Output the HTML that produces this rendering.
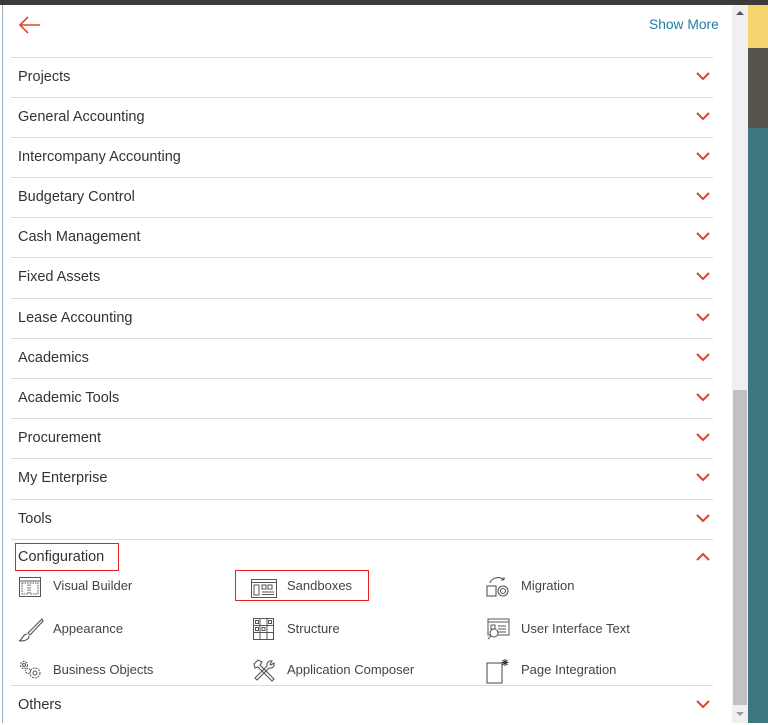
<!DOCTYPE html>
<html><head><style>
*{margin:0;padding:0;box-sizing:border-box}
body{width:768px;height:723px;overflow:hidden;background:#fff;font-family:"Liberation Sans",sans-serif;position:relative;color:#333}
.top{position:absolute;left:0;top:0;width:768px;height:5px;background:#3b3b3b}
.lb{position:absolute;left:2px;top:5px;width:1px;height:718px;background:#9fb0c2}
.right{position:absolute;left:748px;top:5px;width:20px;height:718px;background:#3f7780}
.yel{position:absolute;left:748px;top:5px;width:20px;height:43px;background:#f5d36e}
.gry{position:absolute;left:748px;top:48px;width:20px;height:80px;background:#57524c}
.sb{position:absolute;left:732px;top:5px;width:16px;height:718px;background:#f0f0f0}
.thumb{position:absolute;left:733px;top:390px;width:14px;height:315px;background:#c1c1c1}
.row{position:absolute;left:11px;width:702px;height:40px;border-top:1px solid #d6dde5;font-size:14.5px;line-height:38px;padding-left:7px}
.chev{position:absolute;right:3px;top:14px}
.sm{position:absolute;left:650px;top:17px;font-size:14px;color:#1f7fa6}
.it{position:absolute;font-size:13px;color:#444}
.ic{position:absolute}
.red{position:absolute;border:1.5px solid #e62020}
</style></head><body>
<div class="top"></div><div class="lb"></div>
<div class="right"></div><div class="yel"></div><div class="gry"></div>
<div class="sb"></div><div class="thumb"></div>
<svg style="position:absolute;left:735px;top:9px" width="10" height="8"><path d="M1 6L5 2L9 6Z" fill="#555"/></svg>
<svg style="position:absolute;left:735px;top:710px" width="10" height="8"><path d="M1 2L5 6L9 2Z" fill="#999"/></svg>
<svg style="position:absolute;left:18px;top:16px" width="24" height="18"><path d="M22 9H2M10 1L2 9L10 17" stroke="#e2452c" stroke-width="1.6" fill="none"/></svg>
<div class="sm" style="left:649px;font-size:13.8px">Show More</div>

<div class="row" style="top:57px">Projects<svg class="chev" width="14" height="9"><path d="M1 1L7 7L13 1" stroke="#d9442b" stroke-width="2" fill="none"/></svg></div>
<div class="row" style="top:97px">General Accounting<svg class="chev" width="14" height="9"><path d="M1 1L7 7L13 1" stroke="#d9442b" stroke-width="2" fill="none"/></svg></div>
<div class="row" style="top:137px">Intercompany Accounting<svg class="chev" width="14" height="9"><path d="M1 1L7 7L13 1" stroke="#d9442b" stroke-width="2" fill="none"/></svg></div>
<div class="row" style="top:177px">Budgetary Control<svg class="chev" width="14" height="9"><path d="M1 1L7 7L13 1" stroke="#d9442b" stroke-width="2" fill="none"/></svg></div>
<div class="row" style="top:217px">Cash Management<svg class="chev" width="14" height="9"><path d="M1 1L7 7L13 1" stroke="#d9442b" stroke-width="2" fill="none"/></svg></div>
<div class="row" style="top:257px">Fixed Assets<svg class="chev" width="14" height="9"><path d="M1 1L7 7L13 1" stroke="#d9442b" stroke-width="2" fill="none"/></svg></div>
<div class="row" style="top:298px">Lease Accounting<svg class="chev" width="14" height="9"><path d="M1 1L7 7L13 1" stroke="#d9442b" stroke-width="2" fill="none"/></svg></div>
<div class="row" style="top:338px">Academics<svg class="chev" width="14" height="9"><path d="M1 1L7 7L13 1" stroke="#d9442b" stroke-width="2" fill="none"/></svg></div>
<div class="row" style="top:378px">Academic Tools<svg class="chev" width="14" height="9"><path d="M1 1L7 7L13 1" stroke="#d9442b" stroke-width="2" fill="none"/></svg></div>
<div class="row" style="top:418px">Procurement<svg class="chev" width="14" height="9"><path d="M1 1L7 7L13 1" stroke="#d9442b" stroke-width="2" fill="none"/></svg></div>
<div class="row" style="top:458px">My Enterprise<svg class="chev" width="14" height="9"><path d="M1 1L7 7L13 1" stroke="#d9442b" stroke-width="2" fill="none"/></svg></div>
<div class="row" style="top:499px">Tools<svg class="chev" width="14" height="9"><path d="M1 1L7 7L13 1" stroke="#d9442b" stroke-width="2" fill="none"/></svg></div>
<div class="row" style="top:539px;height:146px;line-height:34px">Configuration<svg class="chev" width="14" height="9" style="top:12px"><path d="M1 8L7 2L13 8" stroke="#d9442b" stroke-width="2" fill="none"/></svg></div>
<div class="row" style="top:685px">Others<svg class="chev" width="14" height="9"><path d="M1 1L7 7L13 1" stroke="#d9442b" stroke-width="2" fill="none"/></svg></div>

<div class="red" style="left:15px;top:543px;width:104px;height:28px"></div>
<div class="red" style="left:235px;top:570px;width:134px;height:31px"></div>

<svg class="ic" style="left:19px;top:577px" width="22" height="20" fill="none" stroke="#555" stroke-width="1"><rect x="0.5" y="0.5" width="21" height="19"/><path d="M0.5 4H21.5"/><rect x="3" y="6" width="6" height="11" stroke-dasharray="1.5 1"/><rect x="11" y="6" width="8" height="11" stroke-dasharray="1.5 1"/></svg>
<div class="it" style="left:53px;top:578px">Visual Builder</div>
<svg class="ic" style="left:251px;top:579px" width="26" height="19" fill="none" stroke="#555" stroke-width="1"><rect x="0.5" y="0.5" width="25" height="18"/><path d="M0.5 3.5H25.5"/><rect x="3" y="6" width="5" height="10"/><rect x="11" y="6" width="4" height="4"/><rect x="17" y="6" width="4" height="4"/><path d="M11 13H23M11 15.5H23"/></svg>
<div class="it" style="left:287px;top:578px">Sandboxes</div>
<svg class="ic" style="left:486px;top:574px" width="24" height="24" fill="none" stroke="#555" stroke-width="1.1"><path d="M4 9C6 3 14 2 18 6M18 6L15 6M18 6L18 3"/><rect x="1" y="12" width="9" height="10"/><circle cx="17" cy="17" r="5"/><circle cx="17" cy="17" r="2.5"/></svg>
<div class="it" style="left:521px;top:578px">Migration</div>

<svg class="ic" style="left:18px;top:618px" width="26" height="24" fill="none" stroke="#555" stroke-width="1.1"><path d="M24 1L10 15L12 17L25 3Z"/><path d="M9 16C5 16 5 21 1 23C6 23 11 22 11 18"/></svg>
<div class="it" style="left:53px;top:621px">Appearance</div>
<svg class="ic" style="left:253px;top:618px" width="21" height="22" fill="none" stroke="#555" stroke-width="1"><rect x="0.5" y="0.5" width="20" height="21"/><path d="M7 0.5V21.5M14 0.5V21.5M0.5 7.5H20.5M0.5 14.5H20.5"/><rect x="2.5" y="2.5" width="3" height="3"/><rect x="15.5" y="2.5" width="3" height="3"/><rect x="9" y="9.5" width="3" height="3"/><rect x="2.5" y="9.5" width="3" height="3"/></svg>
<div class="it" style="left:287px;top:621px">Structure</div>
<svg class="ic" style="left:486px;top:618px" width="24" height="22" fill="none" stroke="#555" stroke-width="1"><rect x="2" y="1" width="21" height="16"/><path d="M2 4H23M12 8H20M12 11H20M12 14H20"/><rect x="5" y="7" width="4" height="4"/><circle cx="8" cy="15" r="4" fill="#fff"/><path d="M5 18L2 21"/></svg>
<div class="it" style="left:521px;top:621px">User Interface Text</div>

<svg class="ic" style="left:18px;top:659px" width="25" height="22" fill="none" stroke="#555" stroke-width="1"><circle cx="6" cy="6" r="3.5" stroke-dasharray="2 1"/><circle cx="6" cy="6" r="1.5"/><circle cx="17" cy="14" r="5" stroke-dasharray="2 1"/><circle cx="17" cy="14" r="2"/><circle cx="10" cy="12" r="2.5" stroke-dasharray="1.5 1"/></svg>
<div class="it" style="left:53px;top:662px">Business Objects</div>
<svg class="ic" style="left:252px;top:659px" width="24" height="24" fill="none" stroke="#555" stroke-width="1.1"><path d="M2 5L6 1L10 3L8 6L22 20L20 22L6 8L3 9Z"/><path d="M22 4A4 4 0 0 1 17 9L5 21L3 19L15 7A4 4 0 0 1 20 2L18 5L19 6Z"/></svg>
<div class="it" style="left:287px;top:662px">Application Composer</div>
<svg class="ic" style="left:486px;top:658px" width="24" height="26" fill="none" stroke="#555" stroke-width="1.1"><rect x="1" y="5" width="15" height="20"/><path d="M19 1V8M15.5 4.5H22.5M16.5 2L21.5 7M21.5 2L16.5 7" stroke="#333"/></svg>
<div class="it" style="left:521px;top:662px">Page Integration</div>
</body></html>
